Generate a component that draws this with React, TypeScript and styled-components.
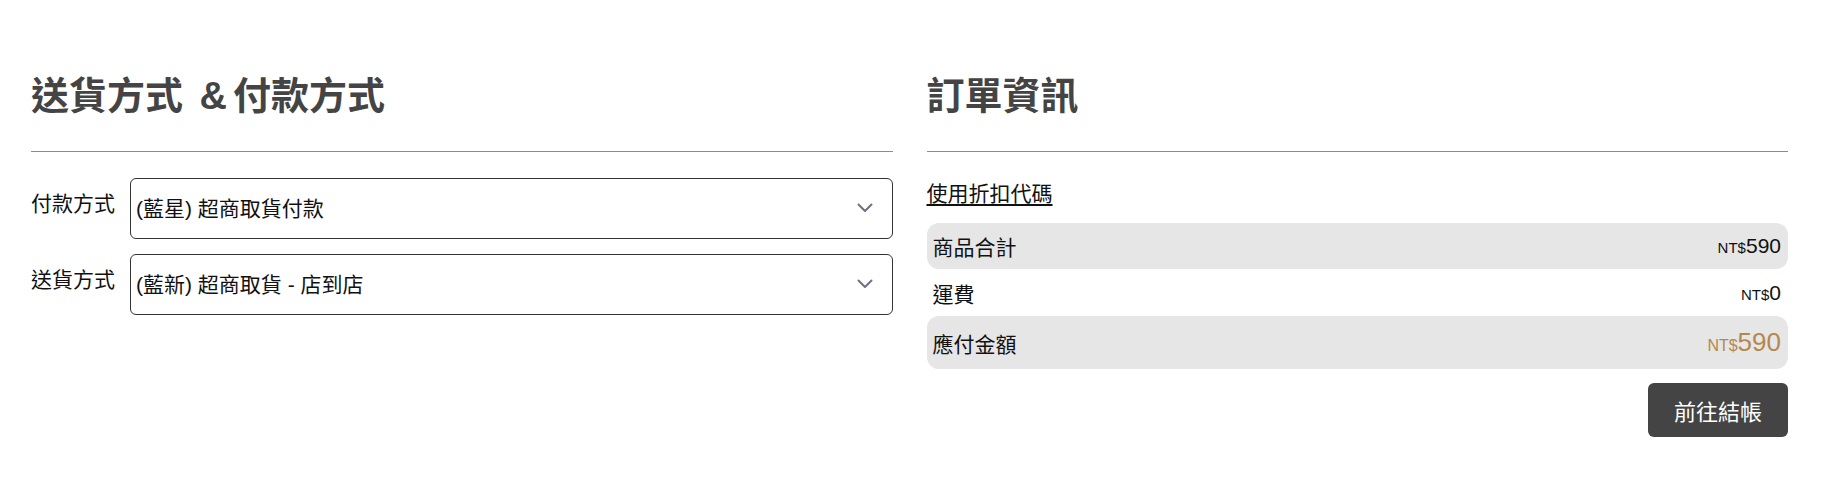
import React from 'react';
import styled, { createGlobalStyle } from 'styled-components';

const GlobalStyle = createGlobalStyle`
  html, body {
    margin: 0;
    padding: 0;
    background: #fff;
  }
  body {
    font-family: "Liberation Sans", "Noto Sans CJK TC", sans-serif;
    color: #111;
  }
  * {
    box-sizing: border-box;
  }
`;

const Page = styled.div`
  display: grid;
  grid-template-columns: 1fr 1fr;
  column-gap: 34px;
  padding: 74px 45px 0 31px;
`;

const Column = styled.section`
  display: flex;
  flex-direction: column;
`;

const Heading = styled.h2`
  margin: 0;
  padding-bottom: 31px;
  border-bottom: 1px solid #8c8c8c;
  font-size: 38px;
  line-height: 1.2;
  font-weight: 700;
  color: #444;
`;

const Amp = styled.span`
  margin: 0 6px 0 6px;
`;

const Form = styled.div`
  display: flex;
  flex-direction: column;
  gap: 15px;
  margin-top: 26px;
`;

const Field = styled.div`
  display: flex;
  align-items: flex-start;
  gap: 15px;
`;

const Label = styled.label`
  padding-top: 10px;
  font-size: 21px;
  line-height: 1.5;
  white-space: nowrap;
  color: #111;
`;

const SelectWrap = styled.div`
  position: relative;
  flex: 1;
`;

const Select = styled.select`
  appearance: none;
  width: 100%;
  height: 61px;
  padding: 0 44px 0 5px;
  border: 1px solid #333;
  border-radius: 6px;
  background: #fff;
  font-family: "Liberation Sans", "Noto Sans CJK TC", sans-serif;
  font-size: 21px;
  color: #111;
  outline: none;
`;

const Chevron = styled.svg`
  position: absolute;
  right: 20px;
  top: 50%;
  transform: translateY(-50%);
  pointer-events: none;
`;

const DiscountLink = styled.a`
  align-self: flex-start;
  margin-top: 26px;
  font-size: 21px;
  line-height: 1.5;
  color: #111;
  text-decoration: underline;
  text-underline-offset: 3px;
  cursor: pointer;
`;

const Summary = styled.div`
  display: flex;
  flex-direction: column;
  margin-top: 14px;
`;

const Row = styled.div<{ $shaded?: boolean; $height: number }>`
  display: flex;
  align-items: center;
  justify-content: space-between;
  height: ${(p) => p.$height}px;
  padding: 0 7px 0 6px;
  border-radius: 12px;
  background: ${(p) => (p.$shaded ? '#e6e6e6' : 'transparent')};
  font-size: 21px;
  color: #111;
`;

const Price = styled.span<{ $total?: boolean }>`
  display: flex;
  align-items: baseline;
  color: ${(p) => (p.$total ? '#b5874d' : '#111')};
  font-family: "Liberation Sans", sans-serif;
`;

const Currency = styled.span<{ $total?: boolean }>`
  font-size: ${(p) => (p.$total ? '16px' : '15px')};
`;

const Amount = styled.span<{ $total?: boolean }>`
  font-size: ${(p) => (p.$total ? '26px' : '21px')};
`;

const Actions = styled.div`
  display: flex;
  justify-content: flex-end;
  margin-top: 14px;
`;

const CheckoutButton = styled.button`
  height: 54px;
  padding: 0 26px;
  border: none;
  border-radius: 6px;
  background: #444;
  color: #fff;
  font-family: "Liberation Sans", "Noto Sans CJK TC", sans-serif;
  font-size: 22px;
  cursor: pointer;
`;

const ChevronIcon = () => (
  <Chevron width="16" height="10" viewBox="0 0 16 10" fill="none">
    <path d="M1.5 1.5L8 8l6.5-6.5" stroke="#6b7280" strokeWidth="2" strokeLinecap="round" strokeLinejoin="round" />
  </Chevron>
);

const fields = [
  { label: '付款方式', value: '(藍星) 超商取貨付款' },
  { label: '送貨方式', value: '(藍新) 超商取貨 - 店到店' },
];

export default function App() {
  return (
    <>
      <GlobalStyle />
      <Page>
        <Column>
          <Heading>
            送貨方式 <Amp>&amp;</Amp>付款方式
          </Heading>
          <Form>
            {fields.map((f) => (
              <Field key={f.label}>
                <Label>{f.label}</Label>
                <SelectWrap>
                  <Select defaultValue={f.value}>
                    <option>{f.value}</option>
                  </Select>
                  <ChevronIcon />
                </SelectWrap>
              </Field>
            ))}
          </Form>
        </Column>

        <Column>
          <Heading>訂單資訊</Heading>
          <DiscountLink>使用折扣代碼</DiscountLink>
          <Summary>
            <Row $shaded $height={46}>
              <span>商品合計</span>
              <Price>
                <Currency>NT$</Currency>
                <Amount>590</Amount>
              </Price>
            </Row>
            <Row $height={47}>
              <span>運費</span>
              <Price>
                <Currency>NT$</Currency>
                <Amount>0</Amount>
              </Price>
            </Row>
            <Row $shaded $height={53}>
              <span>應付金額</span>
              <Price $total>
                <Currency $total>NT$</Currency>
                <Amount $total>590</Amount>
              </Price>
            </Row>
          </Summary>
          <Actions>
            <CheckoutButton>前往結帳</CheckoutButton>
          </Actions>
        </Column>
      </Page>
    </>
  );
}
